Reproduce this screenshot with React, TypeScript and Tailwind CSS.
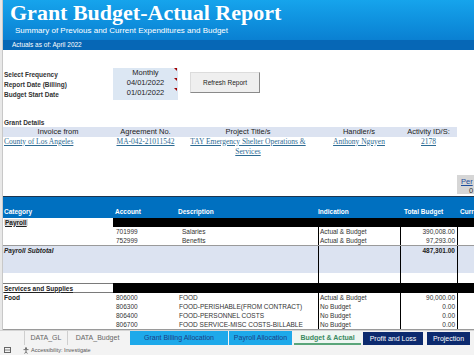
import React from 'react';

const GRID = 'grid grid-cols-[110px_65px_140px_82px_57px_17px]';

function Marker() {
  return (
    <span className="absolute right-[1px] top-0 w-0 h-0 border-l-[3px] border-l-transparent border-t-[3px] border-t-[#a00000]" />
  );
}

function Line({ acct, desc, ind, amt, descPad = 'pl-[1px]' }: { acct: string; desc: string; ind: string; amt: string; descPad?: string }) {
  return (
    <div className={`${GRID} h-[9px] leading-[9px] text-[6.5px] text-[#333]`}>
      <div />
      <div className="pl-[3px]">{acct}</div>
      <div className={`${descPad} whitespace-nowrap overflow-hidden`}>{desc}</div>
      <div className="border-l border-black pl-[1px] whitespace-nowrap">{ind}</div>
      <div className="border-l border-black text-right pr-[2px]">{amt}</div>
      <div className="border-l border-black" />
    </div>
  );
}

function Tabs() {
  return (
    <div className="h-[15px] shrink-0 flex bg-[#f3f3f3] border-t border-[#d4d4d4] text-[7px] leading-[14px]">
      <div className="w-[25px] border-r border-[#cfcfcf]" />
      <div className="w-[43px] text-center text-[#666] border-r border-[#cfcfcf]">DATA_GL</div>
      <div className="w-[59px] text-center text-[#666]">DATA_Budget</div>
      <div className="w-[3px]" />
      <div className="w-[98px] text-center bg-[#1ea9ea] text-[#1b3f86]">Grant Billing Allocation</div>
      <div className="w-[1px]" />
      <div className="w-[63px] text-center bg-[#1ea9ea] text-[#1b3f86] whitespace-nowrap overflow-hidden">Payroll Allocation</div>
      <div className="w-[2px]" />
      <div className="w-[67px] text-center bg-[#eef6f2] text-[#3b8a5f] font-bold border-b-2 border-[#5aa57a] leading-[13px]">Budget &amp; Actual</div>
      <div className="w-[2px]" />
      <div className="w-[60px] mt-[1px] text-center bg-[#0c2a6e] text-white leading-[13px]">Profit and Loss</div>
      <div className="w-[4px]" />
      <div className="w-[43px] mt-[1px] text-center bg-[#0c2a6e] text-white leading-[13px]">Projection</div>
    </div>
  );
}

export default function App() {
  return (
    <div className="w-[474px] h-[355px] overflow-hidden bg-white flex flex-col font-['Liberation_Sans',Arial,sans-serif] text-[#222]">
      <div className="flex h-[330px] shrink-0 overflow-hidden">
        <div className="w-[3px] shrink-0 bg-[#e8e8e8] border-r border-[#c8c8c8]" />
        <div className="flex-1 min-w-0">
          {/* banner */}
          <div className="h-[40px] bg-gradient-to-b from-[#16a4ec] to-[#0a80d2]">
            <div className="pl-[7px] pt-[2px] font-['Liberation_Serif',serif] font-bold text-white text-[22px] leading-[22px]">
              Grant Budget-Actual Report
            </div>
            <div className="pl-[12px] mt-[3px] text-[8px] leading-[8px] text-white">
              Summary of Previous and Current Expenditures and Budget
            </div>
          </div>
          <div className="h-[10px] bg-[#0667b6] pl-[9px] text-[6.5px] leading-[10px] text-white">
            Actuals as of: April 2022
          </div>

          {/* parameters */}
          <div className="flex pt-[18px]">
            <div className="w-[110px] pt-[1.5px] pl-[1px] text-[6.5px] font-bold text-[#333] leading-[10px]">
              <div>Select Frequency</div>
              <div>Report Date (Billing)</div>
              <div>Budget Start Date</div>
            </div>
            <div className="w-[65px] bg-[#dce7f3] text-[7.5px] leading-[10px] text-center text-[#222]">
              <div className="relative">Monthly<Marker /></div>
              <div className="relative">04/01/2022<Marker /></div>
              <div className="relative">01/01/2022<Marker /></div>
            </div>
            <button className="ml-[12px] mt-[4px] w-[70px] h-[21px] bg-[#efefef] border border-[#dcdcdc] border-r-[#8a8a8a] border-b-[#8a8a8a] text-[6.5px] text-[#222]">
              Refresh Report
            </button>
          </div>

          {/* grant details */}
          <div className="mt-[18px] pl-[1px] h-[9px] text-[6.5px] leading-[9px] font-bold text-[#333]">Grant Details</div>
          <div className="grid grid-cols-[110px_65px_140px_82px_57px] h-[10px] bg-[#dce3f1] text-[7.5px] leading-[10px] text-center text-[#222] w-[454px]">
            <div>Invoice from</div>
            <div>Agreement No.</div>
            <div>Project Title/s</div>
            <div>Handler/s</div>
            <div>Activity ID/S:</div>
          </div>
          <div className="grid grid-cols-[110px_65px_140px_82px_57px] w-[454px] font-['Liberation_Serif',serif] text-[7.5px] leading-[10.5px] text-[#2d6b93] underline">
            <div className="text-left pl-[1px]">County of Los Angeles</div>
            <div className="text-center">MA-042-21011542</div>
            <div className="text-center px-[8px]">TAY Emergency Shelter Operations &amp; Services</div>
            <div className="text-center">Anthony Nguyen</div>
            <div className="text-center">2178</div>
          </div>

          <div className="flex justify-end mt-[17px]">
            <div className="w-[17px] h-[19px] bg-[#d6d6d6] overflow-hidden text-[7.5px] leading-[9px] pl-[4px] whitespace-nowrap">
              <div className="text-[#1f4e9c] underline pt-[2px]">Per</div>
              <div className="text-[#333] pl-[8px]">0</div>
            </div>
          </div>

          {/* budget table */}
          <div className="mt-[2px] border-t border-[#1c3550]" />
          <div className={`${GRID} h-[21px] bg-[#0070c0] text-white font-bold text-[6.5px] items-end pb-[2px] leading-[8px]`}>
            <div className="pl-[1px]">Category</div>
            <div className="pl-[2px]">Account</div>
            <div className="pl-[0px]">Description</div>
            <div className="pl-[0px]">Indication</div>
            <div className="pl-[4px] whitespace-nowrap">Total Budget</div>
            <div className="pl-[3px] overflow-hidden">Curr</div>
          </div>
          <div className="flex h-[9px]">
            <div className="w-[110px] pl-[1px] text-[6.5px] leading-[9px] font-bold text-[#222]">
              <span className="underline bg-[#dcdcdc] px-[1px]">Payroll</span>
            </div>
            <div className="flex-1 bg-black" />
          </div>
          <Line acct="701999" desc="Salaries" ind="Actual &amp; Budget" amt="390,008.00" descPad="pl-[4px]" />
          <div className="border-b border-[#9a9a9a]">
            <Line acct="752999" desc="Benefits" ind="Actual &amp; Budget" amt="97,293.00" descPad="pl-[4px]" />
          </div>
          <div className={`${GRID} h-[27px] bg-[#dce3f1] text-[6.5px] leading-[9px] font-bold`}>
            <div className="pl-[1px] italic">Payroll Subtotal</div>
            <div />
            <div />
            <div className="border-l border-black" />
            <div className="border-l border-black text-right pr-[2px]">487,301.00</div>
            <div className="border-l border-black" />
          </div>
          <div className={`${GRID} h-[10px]`}>
            <div />
            <div />
            <div />
            <div className="border-l border-black" />
            <div className="border-l border-black" />
            <div className="border-l border-black" />
          </div>
          <div className="flex h-[10px]">
            <div className="w-[110px] pl-[1px] text-[6.5px] leading-[9px] font-bold text-[#222] border-y border-[#7a7a7a]">
              <span className="underline">Services and Supplies</span>
            </div>
            <div className="flex-1 bg-black" />
          </div>
          <div className="relative">
            <div className="absolute left-[1px] top-0 text-[6.5px] leading-[9px] font-bold text-[#222]">Food</div>
            <Line acct="806000" desc="FOOD" ind="Actual &amp; Budget" amt="90,000.00" />
            <Line acct="806300" desc="FOOD-PERISHABLE(FROM CONTRACT)" ind="No Budget" amt="0.00" />
            <Line acct="806400" desc="FOOD-PERSONNEL COSTS" ind="No Budget" amt="0.00" />
            <div className="border-b border-[#9a9a9a]">
              <Line acct="806700" desc="FOOD SERVICE-MISC COSTS-BILLABLE" ind="No Budget" amt="0.00" />
            </div>
          </div>
          <div className={`${GRID} h-[9px] bg-[#dce3f1] text-[6.5px] leading-[9px] font-bold`}>
            <div className="pl-[1px] italic">Food Subtotal</div>
            <div />
            <div />
            <div className="border-l border-black" />
            <div className="border-l border-black text-right pr-[2px]">90,000.00</div>
            <div className="border-l border-black" />
          </div>
        </div>
      </div>

      <Tabs />

      <div className="h-[10px] shrink-0 flex items-center gap-[6px] bg-[#f3f3f3] pl-[4px] text-[5.5px] text-[#555]">
        <svg width="7" height="6" viewBox="0 0 7 6" className="shrink-0">
          <rect x="0.5" y="0.5" width="6" height="5" fill="none" stroke="#666" strokeWidth="1" />
          <line x1="0.5" y1="3" x2="6.5" y2="3" stroke="#666" strokeWidth="0.8" />
        </svg>
        <div className="flex items-center gap-[2px] ml-[6px]">
          <svg width="6" height="7" viewBox="0 0 6 7" className="shrink-0">
            <circle cx="3" cy="1.2" r="0.9" fill="#555" />
            <path d="M0.5 2.6 H5.5 M3 2.6 V4.6 L1.6 6.6 M3 4.6 L4.4 6.6" stroke="#555" strokeWidth="0.8" fill="none" />
          </svg>
          <span>Accessibility: Investigate</span>
        </div>
      </div>
    </div>
  );
}
